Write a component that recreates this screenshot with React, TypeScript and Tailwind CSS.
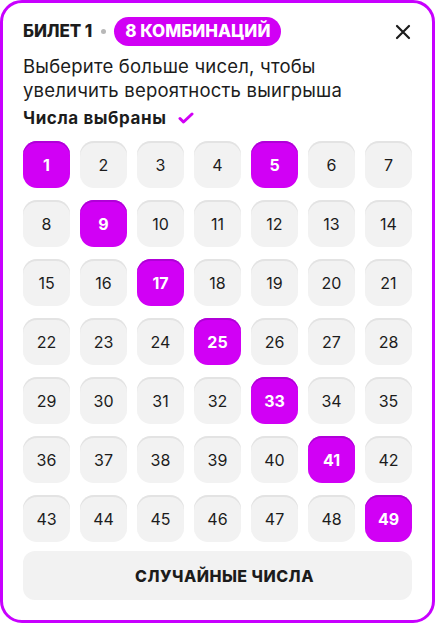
import React from 'react';

const selected = new Set([1, 5, 9, 17, 25, 33, 41, 49]);
const numbers = Array.from({ length: 49 }, (_, i) => i + 1);

const App: React.FC = () => {
    return (
        <div className="w-[435px] h-[624px] bg-white font-['Inter',sans-serif] text-[#1c1c1c]">
            <div className="h-[623px] border-[3px] border-[#c800ff] rounded-[22px] px-5 pt-[14px] pb-5 flex flex-col">
                <div className="flex items-center h-[29px]">
                    <span className="text-[17px] font-extrabold tracking-[-0.1px]">БИЛЕТ 1</span>
                    <span className="w-[5px] h-[5px] rounded-full bg-[#b8b8b8] ml-[9px] mr-[8px]" />
                    <span className="h-[29px] px-[11px] rounded-full bg-[#d100f5] text-white text-[17px] font-extrabold flex items-center tracking-[0px]">
                        8 КОМБИНАЦИЙ
                    </span>
                    <button className="ml-auto mr-[1px] text-[#1c1c1c]">
                        <svg width="16" height="16" viewBox="0 0 16 16" fill="none" stroke="currentColor" strokeWidth="2.2" strokeLinecap="round">
                            <path d="M2 2l12 12M14 2L2 14" />
                        </svg>
                    </button>
                </div>
                <p className="mt-[8px] text-[18.5px] leading-[24px] tracking-[0.2px]">
                    Выберите больше чисел, чтобы<br />увеличить вероятность выигрыша
                </p>
                <div className="mt-[6px] flex items-center h-[22px]">
                    <span className="text-[17px] font-bold tracking-[0.6px]">Числа выбраны</span>
                    <svg className="ml-[11px] mt-[-2px]" width="16" height="12" viewBox="0 0 16 12" fill="none" stroke="#d100f5" strokeWidth="3" strokeLinecap="round" strokeLinejoin="round">
                        <path d="M2 6.5l3.5 3.5 8.5-8" />
                    </svg>
                </div>
                <div className="mt-[11px] grid grid-cols-7 gap-x-[10px] gap-y-[12px]">
                    {numbers.map((n) =>
                        selected.has(n) ? (
                            <div
                                key={n}
                                className="h-[47px] rounded-[14px] bg-[#d100f5] shadow-[inset_0_2px_0_#b000d8] flex items-center justify-center text-white text-[16px] font-bold"
                            >
                                {n}
                            </div>
                        ) : (
                            <div
                                key={n}
                                className="h-[47px] rounded-[14px] bg-[#f2f2f2] shadow-[inset_0_2px_0_#e3e3e3] flex items-center justify-center text-[16px] text-[#1c1c1c]"
                            >
                                {n}
                            </div>
                        )
                    )}
                </div>
                <button className="mt-[9px] h-[51px] rounded-[12px] bg-[#f2f2f2] pl-[14px] text-[16px] font-extrabold tracking-[0.5px]">
                    СЛУЧАЙНЫЕ ЧИСЛА
                </button>
            </div>
        </div>
    );
};

export default App;
